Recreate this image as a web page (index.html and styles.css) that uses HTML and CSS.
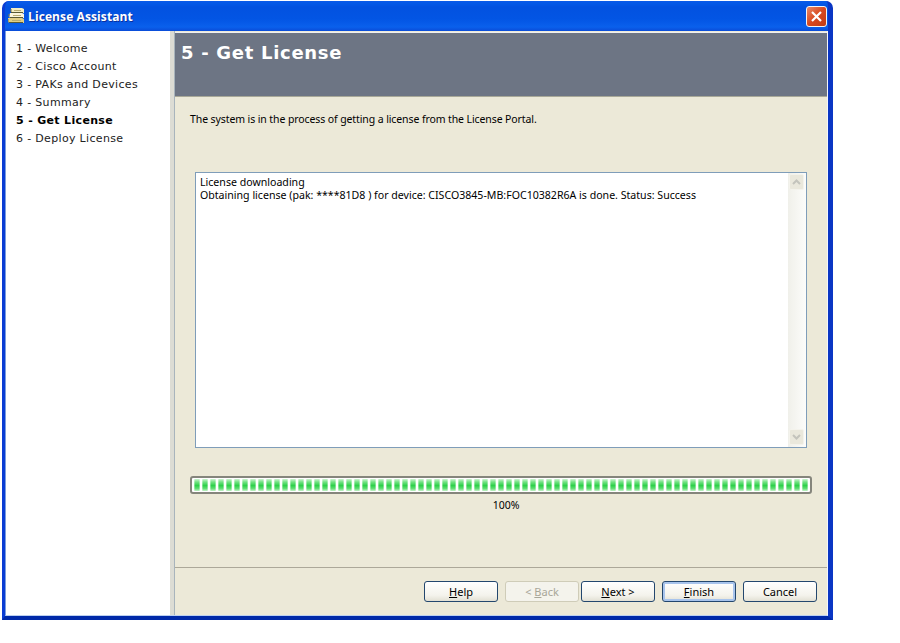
FILE: index.html
```
<!DOCTYPE html>
<html lang="en">
<head>
<meta charset="utf-8">
<title>License Assistant</title>
<link rel="stylesheet" href="styles.css">
</head>
<body>
<div class="window">
  <div class="titlebar">
    <svg class="app-icon" width="17" height="16" viewBox="0 0 17 16">
      <path d="M3 0h11l2 1v4H8L3 4z" fill="#f3edc4"/>
      <path d="M2 5h12l2 1v4H3L1 9z" fill="#fbf6dc"/>
      <path d="M0 10h14l2 1v4H2l-2-1z" fill="#e2cf84"/>
      <path d="M3 4.500h12M2 9.500h13M1 14.500h14" stroke="#5a5a34"/>
      <path d="M3 1v3M1 6v3M0 11v3" stroke="#7a7444"/>
      <path d="M6 2.500h7M5 7.500h8M4 12.500h9" stroke="#b8ac70"/>
    </svg>
    <span class="title-text">License Assistant</span>
    <div class="close-btn">
      <svg width="13" height="13" viewBox="0 0 13 13"><path d="M2 2l9 9M11 2l-9 9" stroke="#fff" stroke-width="2.200"/></svg>
    </div>
  </div>
  <div class="client">
    <nav class="steps">
      <div class="step">1 - Welcome</div>
      <div class="step">2 - Cisco Account</div>
      <div class="step">3 - PAKs and Devices</div>
      <div class="step">4 - Summary</div>
      <div class="step step-current">5 - Get License</div>
      <div class="step">6 - Deploy License</div>
    </nav>
    <div class="divider"></div>
    <main class="page">
      <header class="page-header"><h1 class="page-title">5 - Get License</h1></header>
      <div class="page-body">
        <p class="intro">The system is in the process of getting a license from the License Portal.</p>
        <div class="log">
          <div class="log-text">License downloading<br>Obtaining license (pak: ****81D8 ) for device: CISCO3845-MB:FOC10382R6A is done. Status: Success</div>
          <div class="scrollbar">
            <div class="scroll-btn"><svg width="9" height="6" viewBox="0 0 9 6"><path d="M1 5l3.500-3.500L8 5" fill="none" stroke="#c4c4bc" stroke-width="2"/></svg></div>
            <div class="scroll-btn"><svg width="9" height="6" viewBox="0 0 9 6"><path d="M1 1l3.500 3.500L8 1" fill="none" stroke="#c4c4bc" stroke-width="2"/></svg></div>
          </div>
        </div>
        <div class="progress"><div class="progress-fill"></div></div>
        <div class="percent">100%</div>
      </div>
      <footer class="page-footer">
        <button class="btn"><u>H</u>elp</button>
        <button class="btn btn-disabled btn-back"><span>&lt; <u>B</u>ack</span></button>
        <button class="btn btn-next"><u>N</u>ext &gt;</button>
        <button class="btn btn-default"><u>F</u>inish</button>
        <button class="btn">Cancel</button>
      </footer>
    </main>
  </div>
</div>
</body>
</html>
```
FILE: styles.css
```
html, body { margin: 0; padding: 0; background: #fff; }
body { height: 643px; padding: 1px 0 0 2px; box-sizing: border-box; font-family: "Noto Sans", "Open Sans", sans-serif; font-size: 11px; color: #000; overflow: hidden; }
.window { width: 831px; height: 619px; display: flex; flex-direction: column; background: #0a3fd0; border-radius: 7px 7px 0 0; box-sizing: border-box; border-bottom: 4px solid #0029a8; border-left: 3px solid #0a3cd4; border-right: 5px solid #0a36c4; overflow: hidden; }
.titlebar { height: 30px; flex: none; display: flex; align-items: center; margin: 0 -5px 0 -3px; padding: 0 6px; background: linear-gradient(180deg, #0a5ae8 0, #0458e6 3px, #0352e0 6px, #0355e4 18px, #0a60ec 26px, #0a4cd8 30px); }
.app-icon { flex: none; margin-right: 3px; }
.title-text { font-family: "Open Sans", "Noto Sans", sans-serif; font-weight: 700; font-size: 12px; letter-spacing: 0.1px; color: #fff; text-shadow: 1px 1px 0 #0a2f9c; flex: 1; }
.close-btn { width: 19px; height: 19px; border: 1px solid #f4f4f4; border-radius: 3px; background: linear-gradient(135deg, #e88a68, #d8481e 50%, #c23c14); display: flex; align-items: center; justify-content: center; }
.client { flex: 1; min-height: 0; display: flex; background: #ece9d8; border-left: 1px solid #7a9ee0; border-right: 1px solid #f4f6fb; border-bottom: 1px solid #bcd0f0; }
.steps { width: 164px; flex: none; box-sizing: border-box; padding: 9px 0 0 10px; background: #fff; font-family: "DejaVu Sans", sans-serif; font-size: 11px; letter-spacing: 0.33px; color: #222; }
.step { height: 18px; line-height: 18px; white-space: nowrap; }
.step-current { font-weight: 700; color: #000; }
.divider { width: 5px; flex: none; background: #dcdcd4; border-right: 1px solid #a8b4bc; box-sizing: border-box; }
.page { flex: 1; min-width: 0; display: flex; flex-direction: column; padding-top: 1px; background: #ece9d8; }
.page-header { height: 65px; flex: none; background: #6d7584; border-top: 1px solid #f0f0f0; border-bottom: 1px solid #a8a898; box-sizing: border-box; padding: 9px 0 0 6px; }
.page-title { margin: 0; font-family: "DejaVu Sans", sans-serif; font-size: 18px; line-height: 22px; font-weight: 700; color: #fff; letter-spacing: 0.7px; }
.page-body { flex: 1; min-height: 0; display: flex; flex-direction: column; padding: 0 15px; }
.intro { margin: 15px 0 0; height: 15px; line-height: 15px; font-size: 10.5px; letter-spacing: -0.1px; }
.log { margin: 45px 5px 0; height: 276px; flex: none; box-sizing: border-box; display: flex; background: #fff; border: 1px solid #7f9db9; }
.log-text { flex: 1; padding: 3px 0 0 4px; line-height: 13px; font-size: 10.6px; }
.scrollbar { width: 18px; flex: none; display: flex; flex-direction: column; justify-content: space-between; background: linear-gradient(90deg, #f0f0ea, #fcfcfa); padding: 1px 2px 2px 1px; box-sizing: border-box; }
.scroll-btn { height: 16px; box-sizing: border-box; background: #eae8dc; border: 1px solid #f4f3ec; border-radius: 2px; display: flex; align-items: center; justify-content: center; }
.progress { margin-top: 28px; height: 18px; flex: none; box-sizing: border-box; border: 2px solid #85857c; border-radius: 3px; background: #fff; padding: 1px 0; }
.progress-fill { height: 100%; margin-right: 2px; background: repeating-linear-gradient(90deg, #fff 0, #fff 2px, rgba(255,255,255,0.35) 2px, rgba(255,255,255,0.35) 3px, transparent 3px, transparent 7px, rgba(255,255,255,0.35) 7px, rgba(255,255,255,0.35) 8px), linear-gradient(180deg, #cdf4d0 0, #74e284 25%, #2cd048 55%, #62de74 80%, #c4f0c8 100%); }
.percent { text-align: center; margin-top: 4px; padding-left: 10px; height: 14px; line-height: 14px; font-size: 10.5px; }
.page-footer { margin-top: auto; height: 48px; flex: none; box-sizing: border-box; border-top: 1px solid #aca899; display: flex; align-items: flex-start; justify-content: flex-end; padding: 13px 10px 0 0; gap: 7px; }
.btn { width: 74px; height: 21px; padding: 0; box-sizing: border-box; border: 1px solid #23476e; border-radius: 3px; background: linear-gradient(180deg, #fff, #f4f3ec 70%, #e2e0d4); font-family: "Noto Sans", sans-serif; font-size: 11px; line-height: 17px; color: #000; }
.btn-disabled { border-color: #cfccb8; background: #f4f3ec; color: #a8a698; }
.btn-next { margin-left: -5px; }
.btn-default { box-shadow: inset 0 0 0 2px #a8c4ec; }
```
